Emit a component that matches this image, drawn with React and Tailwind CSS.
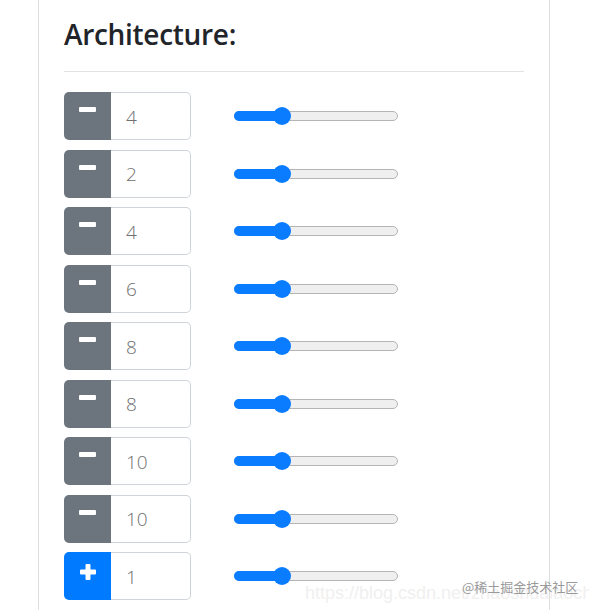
import React from "react";

const rows = [
  { v: "4", minus: true },
  { v: "2", minus: true },
  { v: "4", minus: true },
  { v: "6", minus: true },
  { v: "8", minus: true },
  { v: "8", minus: true },
  { v: "10", minus: true },
  { v: "10", minus: true },
  { v: "1", minus: false },
];

function Slider() {
  return (
    <div className="relative w-[164px] h-[20px] flex items-center">
      <div className="w-full h-[10px] rounded-full bg-[#efefef] border border-[#b5b5b5]" />
      <div className="absolute left-0 top-[5px] w-[50px] h-[10px] rounded-full bg-[#0a7cff]" />
      <div className="absolute left-[39px] top-[1px] w-[18px] h-[18px] rounded-full bg-[#0a7cff]" />
    </div>
  );
}

function Row({ v, minus }) {
  return (
    <div className="flex items-center h-[48px]">
      <div className="flex h-[48px]">
        <div
          className={
            "w-[47px] h-[48px] rounded-l-[5px] relative " +
            (minus ? "bg-[#6c757d]" : "bg-[#007bff]")
          }
        >
          {minus ? (
            <div className="absolute left-[15px] top-[15px] w-[17px] h-[5px] bg-white rounded-[1px]" />
          ) : (
            <svg
              className="absolute left-[16px] top-[12px]"
              width="16"
              height="16"
              viewBox="0 0 16 16"
            >
              <rect x="5.5" y="0" width="5" height="16" rx="1" fill="white" />
              <rect x="0" y="5.5" width="16" height="5" rx="1" fill="white" />
            </svg>
          )}
        </div>
        <div className="w-[80px] h-[48px] border border-l-0 border-[#ced4da] rounded-r-[5px] bg-white flex items-center pl-[15px] pt-[2px] text-[19px] font-light text-[#707070] font-['Open_Sans',sans-serif]">
          {v}
        </div>
      </div>
      <div className="ml-[43px]">
        <Slider />
      </div>
    </div>
  );
}

export default function App() {
  return (
    <div className="relative w-[589px] h-[610px] bg-white overflow-hidden font-['Open_Sans',sans-serif]">
      <div className="ml-[38px] w-[512px] h-[610px] border-l border-r border-[#dedede] px-[25px] pt-[16px]">
        <h2 className="text-[28px] font-semibold text-[#212529] leading-[36px] tracking-[-0.3px]">
          Architecture:
        </h2>
        <div className="mt-[19px] h-px bg-[#e2e2e2]" />
        <div className="mt-[20px] flex flex-col gap-[9.5px]">
          {rows.map((r, i) => (
            <Row key={i} {...r} />
          ))}
        </div>
      </div>
      <div className="absolute left-[305px] top-[580px] text-[18px] text-[#f0f0f0] font-['Liberation_Sans',sans-serif] whitespace-nowrap">
        https://blog.csdn.net/zhaoshuaiaochihu
      </div>
      <div className="absolute left-[462px] top-[577px] text-[13px] text-[#9a9a9a] font-['Noto_Sans_CJK_SC',sans-serif] whitespace-nowrap">
        @稀土掘金技术社区
      </div>
    </div>
  );
}
